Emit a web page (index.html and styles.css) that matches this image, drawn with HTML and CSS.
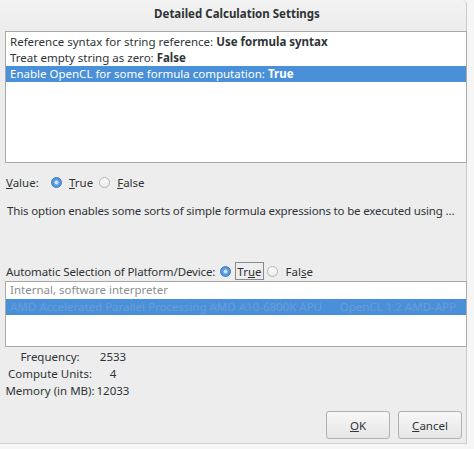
FILE: index.html
```html
<!DOCTYPE html>
<html>
<head>
<meta charset="utf-8">
<link rel="stylesheet" href="styles.css">
</head>
<body>
<div class="dialog">
  <div class="titlebar">Detailed Calculation Settings</div>
  <div class="content">
    <div class="listbox top-list">
      <div class="row">Reference syntax for string reference: <b>Use formula syntax</b></div>
      <div class="row">Treat empty string as zero: <b>False</b></div>
      <div class="row selected">Enable OpenCL for some formula computation: <b>True</b></div>
    </div>

    <div class="value-row">
      <span class="label"><u>V</u>alue:</span>
      <span class="radio checked"></span><span class="rlabel"><u>T</u>rue</span>
      <span class="radio"></span><span class="rlabel"><u>F</u>alse</span>
    </div>

    <div class="desc">This option enables some sorts of simple formula expressions to be executed using ...</div>

    <div class="auto-row">
      <span class="label">Automatic Selection of Platform/Device:</span>
      <span class="radio checked"></span><span class="rlabel focus">Tr<u>u</u>e</span>
      <span class="radio"></span><span class="rlabel">Fal<u>s</u>e</span>
    </div>

    <div class="listbox dev-list">
      <div class="row dim">Internal, software interpreter</div>
      <div class="row selected ghost"><span>AMD Accelerated Parallel Processing AMD A10-6800K APU</span><span>OpenCL 1.2 AMD-APP</span></div>
    </div>

    <div class="info">
      <span class="k">Frequency:</span><span class="v">2533</span>
      <span class="k">Compute Units:</span><span class="v">4</span>
      <span class="k">Memory (in MB):</span><span class="v">12033</span>
    </div>

    <div class="buttons">
      <button class="btn"><u>O</u>K</button>
      <button class="btn"><u>C</u>ancel</button>
    </div>
  </div>
</div>
</body>
</html>
```
FILE: styles.css
```css
html, body {
  margin: 0;
  padding: 0;
  background: #f6f6f6;
}
body {
  width: 474px;
  height: 449px;
  overflow: hidden;
  font-family: "Noto Sans", "DejaVu Sans", sans-serif;
  font-size: 11.5px;
  color: #2e3436;
}
.dialog {
  width: 467px;
  height: 444px;
  background: #ededed;
  border-right: 1px solid #c8c8c8;
  border-bottom: 1px solid #d0d0d0;
  box-sizing: border-box;
  border-radius: 5px 5px 0 0;
  display: flex;
  flex-direction: column;
}
.titlebar {
  height: 28px;
  line-height: 27px;
  text-align: center;
  font-weight: bold;
  font-size: 11.5px;
  color: #2e3436;
  background: linear-gradient(#f3f3f3, #ececec);
  border-radius: 5px 5px 0 0;
  padding-left: 8px;
}
.content {
  padding: 3px 0 0 5px;
  display: flex;
  flex-direction: column;
}
.listbox {
  width: 462px;
  box-sizing: border-box;
  background: #fff;
  border: 1px solid #a9a9a9;
  padding: 1px 0;
}
.top-list {
  height: 132px;
  padding-top: 2px;
}
.row {
  height: 16px;
  line-height: 16px;
  padding-left: 4px;
  white-space: nowrap;
}
.row b {
  font-weight: bold;
}
.row.selected {
  background: #4a90d9;
  color: #fff;
}
.row.dim {
  color: #8b8e8f;
}
.dev-list .row.dim {
  line-height: 14px;
}
.row.ghost {
  color: #6a9bd9;
  display: flex;
  justify-content: space-between;
  padding-right: 10px;
}
.value-row, .auto-row {
  display: flex;
  align-items: center;
  height: 20px;
  white-space: nowrap;
}
.value-row {
  margin-top: 9px;
  padding-left: 1px;
}
.value-row .label {
  width: 44px;
}
.value-row .radio {
  margin-left: 1px;
  margin-right: 0;
}
.value-row .rlabel {
  padding: 1px 4px 1px 6px;
}
.desc {
  margin-top: 11px;
  height: 16px;
  line-height: 16px;
  padding-left: 2px;
  white-space: nowrap;
  letter-spacing: -0.16px;
}
.auto-row {
  margin-top: 42px;
  padding-left: 1px;
}
.auto-row .label {
  margin-right: 3px;
  letter-spacing: -0.12px;
}
.auto-row .radio {
  margin-right: 4px;
}
.auto-row .rlabel {
  padding: 1px 2px 1px 3px;
}
.radio {
  width: 11px;
  height: 11px;
  border-radius: 50%;
  border: 1px solid #b4b4b4;
  background: linear-gradient(#fdfdfd, #ececec);
  box-sizing: border-box;
  margin-right: 2px;
  margin-left: 2px;
  position: relative;
}
.radio.checked {
  border-color: #3a7bc4;
  background: radial-gradient(circle at 50% 50%, #cfe3f8 0 1.5px, #5b9ce0 2.5px, #4a8bd4 100%);
}
.rlabel {
  padding: 1px 2px;
  border: 1px solid transparent;
}
.auto-row .rlabel.focus {
  border: 1px solid #8a8a8a;
  padding: 1px 1px;
  height: 18px;
  box-sizing: border-box;
  margin-right: 1px;
}
.dev-list {
  height: 66px;
  margin-top: 0;
}
.info {
  display: grid;
  grid-template-columns: 90px 36px;
  grid-auto-rows: 17px;
  margin-top: 1px;
  line-height: 17px;
}
.info .k, .info .v {
  text-align: center;
  white-space: nowrap;
}
.buttons {
  display: flex;
  justify-content: flex-end;
  gap: 8px;
  margin-top: 12px;
  padding-right: 4px;
}
.btn {
  width: 64px;
  height: 28px;
  font-family: inherit;
  font-size: 11.5px;
  color: #2e3436;
  border: 1px solid #b0b0b0;
  border-radius: 3px;
  background: linear-gradient(#f7f7f7, #e6e6e6);
  padding: 0;
}
```
